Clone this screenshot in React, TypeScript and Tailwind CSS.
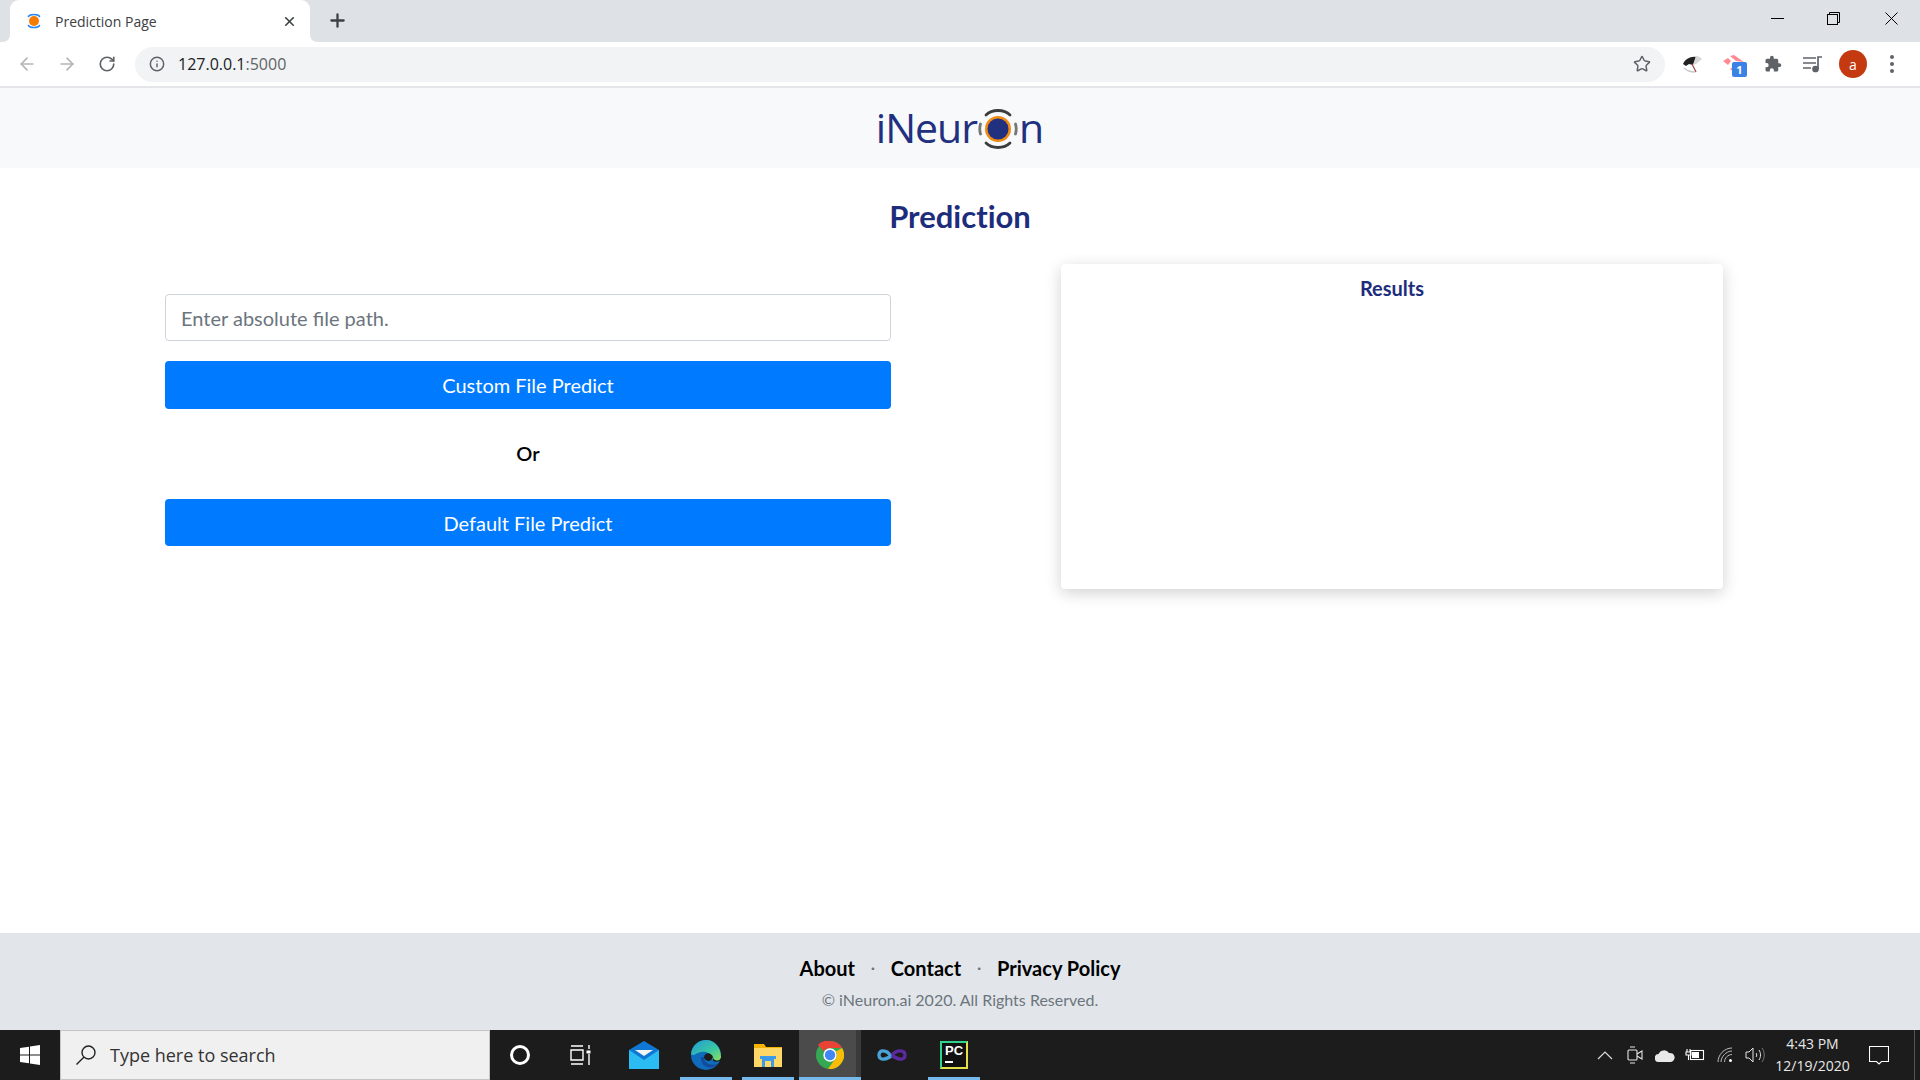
import { ArrowLeft, ArrowRight, Info, Plus, RotateCw, Star, X } from "lucide-react"

const lato = "font-['Lato','Liberation_Sans',sans-serif]"
const segoe = "font-['Open_Sans','Noto_Sans',sans-serif]"

function Favicon() {
  return (
    <svg width="16" height="18" viewBox="0 0 16 18">
      <circle cx="8" cy="9" r="5" fill="#f57c00" />
      <path d="M2.5 4.5C4 1.8 12 1.8 13.5 4.5M2.5 13.5C4 16.2 12 16.2 13.5 13.5" fill="none" stroke="#2a86f0" strokeWidth="1.6" strokeLinecap="round" />
    </svg>
  )
}

function BrowserTabs() {
  return (
    <div className="h-[42px] bg-[#dee1e6] flex items-end pl-[10px] relative">
      <div className="w-[300px] h-[42px] bg-white rounded-t-[9px] flex items-center pl-[16px] pr-[13px] relative">
        <Favicon />
        <span className={`ml-[13px] text-[14px] text-[#3c4043] ${segoe}`}>Prediction Page</span>
        <X size={15} strokeWidth={2.6} className="ml-auto text-[#3c4043]" />
        <svg width="8" height="8" viewBox="0 0 8 8" className="absolute bottom-0 -right-[8px]"><path d="M0 0C0 5 3 8 8 8H0Z" fill="#fff" /></svg>
        <svg width="8" height="8" viewBox="0 0 8 8" className="absolute bottom-0 -left-[8px]"><path d="M8 0C8 5 5 8 0 8H8Z" fill="#fff" /></svg>
      </div>
      <Plus size={21} strokeWidth={2.6} className="ml-[17px] mb-[11px] text-[#3c4043]" />
      <div className="ml-auto self-start flex h-[36px] items-center text-black">
        <div className="w-[56px] flex justify-center"><div className="w-[13px] h-px bg-black mr-[2px]" /></div>
        <div className="w-[56px] flex justify-center">
          <svg width="13" height="13" viewBox="0 0 13 13" fill="none" stroke="#000" className="mr-[2px]"><rect x=".5" y="2.5" width="10" height="10" /><path d="M2.5 2.5V.5H12.5V10.5H10.5" /></svg>
        </div>
        <div className="w-[58px] flex justify-center">
          <svg width="13" height="13" viewBox="0 0 13 13" stroke="#000"><path d="M.5.5 12.5 12.5M12.5.5.5 12.5" /></svg>
        </div>
      </div>
    </div>
  )
}

function BrowserToolbar() {
  return (
    <div className="h-[46px] bg-white border-b-2 border-[#e3e5e8] flex items-center">
      <div className="w-[135px] flex items-center pl-[17px]">
        <ArrowLeft size={20} className="text-[#b3b5b8]" />
        <ArrowRight size={20} className="ml-[20px] text-[#b3b5b8]" />
        <RotateCw size={18} strokeWidth={2.2} className="ml-[21px] text-[#5f6368]" />
      </div>
      <div className="w-[1530px] h-[35px] rounded-full bg-[#f1f3f4] flex items-center pl-[14px] pr-[14px]">
        <Info size={16} strokeWidth={2.2} className="text-[#5f6368]" />
        <span className={`ml-[13px] text-[16px] text-[#202124] ${segoe}`}>127.0.0.1<span className="text-[#5f6368]">:5000</span></span>
        <Star size={18} strokeWidth={2} className="ml-auto text-[#5f6368]" />
      </div>
      <div className="flex-1 flex items-center">
        <div className="w-[54px] flex justify-center">
          <svg width="22" height="22" viewBox="0 0 22 22">
            <path d="M2 11C4 6 10 3 15 4L12 12 8 11 5 13 2 11Z" fill="#222" />
            <path d="M15 3C18 3 20 5 21 6L15 11 12 12Z" fill="#d8d8d8" />
            <path d="M11 11 15 19" stroke="#9c4a4a" strokeWidth="1.2" />
            <path d="M3 15C6 18 11 19 14 19" stroke="#c9c9c9" strokeWidth="1.6" fill="none" />
          </svg>
        </div>
        <div className="w-[32px] flex justify-center relative">
          <svg width="22" height="18" viewBox="0 0 22 18" className="mr-[3px]">
            <path d="M0 6 5 3 8 6 5 10ZM7 1 11 0 21 7 13 6ZM7 14 13 10 16 12 11 17Z" fill="#ff8a94" />
          </svg>
          <span className={`absolute left-[13px] top-[7px] w-[15px] h-[15px] rounded-[2px] bg-[#3b82e6] text-white text-[11px] font-bold leading-[15px] text-center ${segoe}`}>1</span>
        </div>
        <div className="w-[44px] flex justify-center">
          <svg width="18" height="18" viewBox="0 0 24 24" fill="#5f6368"><path d="M20.5 11H19V7a2 2 0 0 0-2-2h-4V3.5a2.5 2.5 0 0 0-5 0V5H4a2 2 0 0 0-2 2v3.8h1.5a2.7 2.7 0 0 1 0 5.4H2V20a2 2 0 0 0 2 2h3.8v-1.5a2.7 2.7 0 0 1 5.4 0V22H17a2 2 0 0 0 2-2v-4h1.5a2.5 2.5 0 0 0 0-5z" /></svg>
        </div>
        <div className="w-[36px] flex justify-center">
          <svg width="20" height="18" viewBox="0 0 20 18" fill="none" stroke="#5f6368" strokeWidth="1.7"><path d="M0 3H13M0 8H13M0 13H8M15 14V2H19" /><circle cx="12.5" cy="14" r="2.5" fill="#5f6368" /></svg>
        </div>
        <div className={`ml-[8px] w-[28px] h-[28px] rounded-full bg-[#c4390f] text-white text-[14px] flex items-center justify-center ${segoe}`}>a</div>
        <div className="ml-[23px] flex flex-col gap-[3px]">
          <div className="w-[4px] h-[4px] rounded-full bg-[#5f6368]" />
          <div className="w-[4px] h-[4px] rounded-full bg-[#5f6368]" />
          <div className="w-[4px] h-[4px] rounded-full bg-[#5f6368]" />
        </div>
      </div>
    </div>
  )
}

function LogoMark() {
  return (
    <svg width="46" height="46" viewBox="0 0 46 46" className="mx-[-2px] mt-[2px]">
      <circle cx="23" cy="23" r="13" fill="#f08a12" />
      <circle cx="23" cy="23" r="10.5" fill="#21307f" />
      <g fill="none" stroke="#3d3d3d" strokeWidth="2.8" strokeLinecap="round">
        <path d="M11 9C17 3 29 3 35 9M11 37C17 43 29 43 35 37" />
        <path d="M5.5 18C4.6 21 4.6 25 5.5 28M40.5 18C41.4 21 41.4 25 40.5 28" stroke="#777" />
      </g>
    </svg>
  )
}

function PredictionForm() {
  return (
    <div className="w-[726px] pt-[30px] flex flex-col">
      <input
        placeholder="Enter absolute file path."
        className="h-[47px] rounded-[4px] border border-[#ced4da] bg-white px-[15px] text-[20px] outline-none placeholder:text-[#6c757d]"
      />
      <button className="mt-[20px] h-[48px] rounded-[4px] bg-[#007bff] text-white text-[20px]">Custom File Predict</button>
      <p className="mt-[32px] text-center text-[20px] font-semibold text-black leading-[24px]">Or</p>
      <button className="mt-[34px] h-[47px] rounded-[4px] bg-[#007bff] text-white text-[20px]">Default File Predict</button>
    </div>
  )
}

function Taskbar() {
  const bar = "absolute bottom-0 left-[5px] right-[5px] h-[3px] bg-[#76b9ed]"
  return (
    <div className={`h-[50px] bg-[#1c1c1c] flex items-stretch text-white ${segoe}`}>
      <div className="w-[60px] flex items-center justify-center">
        <svg width="20" height="20" viewBox="0 0 20 20" fill="#fff"><path d="M0 3 9 1.7V9.4H0ZM10 1.5 20 0V9.4H10ZM0 10.4H9V18.2L0 17ZM10 10.4H20V20L10 18.5Z" /></svg>
      </div>
      <div className="w-[430px] bg-[#f0f0f0] border border-[#c4c4c4] flex items-center pl-[14px]">
        <svg width="22" height="22" viewBox="0 0 22 22" fill="none" stroke="#222" strokeWidth="1.4"><circle cx="13.5" cy="8.5" r="6.5" /><path d="M8.8 13.2 1.5 20.5" /></svg>
        <span className="ml-[13px] text-[18px] text-[#333]">Type here to search</span>
      </div>
      <div className="w-[60px] flex items-center justify-center">
        <div className="w-[20px] h-[20px] rounded-full border-[3px] border-white" />
      </div>
      <div className="w-[60px] flex items-center justify-center">
        <svg width="21" height="20" viewBox="0 0 21 20" fill="none" stroke="#fff" strokeWidth="1.4"><path d="M1 1H13M1 19H13M1 5H13V15H1ZM19 0V4M19 9V20" /><rect x="16.5" y="5.5" width="4" height="3" fill="#fff" stroke="none" /></svg>
      </div>
      <div className="w-[65px] flex items-center justify-center">
        <svg width="30" height="28" viewBox="0 0 30 28" className="ml-[2px]">
          <path d="M0 9 15 0 30 9V28H0Z" fill="#0f78d4" />
          <path d="M0 9 15 19 30 9V28H0Z" fill="#2bbcf3" />
          <path d="M6 9H24L15 15Z" fill="#f4f4f4" />
        </svg>
      </div>
      <div className="w-[62px] relative flex items-center justify-center">
        <svg width="30" height="30" viewBox="0 0 30 30">
          <defs>
            <linearGradient id="edgeTop" x1="0" y1="0" x2="1" y2="1">
              <stop offset="0" stopColor="#1f9bd8" />
              <stop offset="0.6" stopColor="#3cc8a0" />
              <stop offset="1" stopColor="#8fe05a" />
            </linearGradient>
          </defs>
          <circle cx="15" cy="15" r="15" fill="#0f6cbd" />
          <path d="M0 14C1 5 8 0 15 0 24 0 30 8 30 17 30 21 25 22 22 20 20 12 14 11 10 12 5 13 2 17 0 14Z" fill="url(#edgeTop)" />
          <path d="M13 18C13 12 20 12 22 17 20 22 16 22 13 18Z" fill="#1c1c1c" />
          <path d="M22 17C22 21 28 22 30 18L30 20C28 22 24 22 22 21Z" fill="#1c1c1c" />
          <path d="M10 17C9 25 18 32 27 24 20 26 13 24 13 17Z" fill="#144a9c" />
          <path d="M27 24C24 29 18 30 15 30 20 30 24 28 27 24Z" fill="#1c1c1c" />
        </svg>
        <div className={bar} />
      </div>
      <div className="w-[62px] relative flex items-center justify-center">
        <svg width="28" height="24" viewBox="0 0 28 24">
          <path d="M0 1H10L12 4H28V24H0Z" fill="#f4b400" />
          <path d="M0 5H28V24H0Z" fill="#ffd766" />
          <path d="M8 24V15H20V24H17V18H11V24Z" fill="#3b9be8" />
          <rect x="6" y="13" width="16" height="3" fill="#3b9be8" />
        </svg>
        <div className={bar} />
      </div>
      <div className="w-[62px] relative flex items-center justify-center bg-[#4b4b4b] border-r-[5px] border-[#3a3a3a]">
        <svg width="28" height="28" viewBox="0 0 28 28" className="ml-[5px]">
          <circle cx="14" cy="14" r="14" fill="#34a853" />
          <path d="M14 0A14 14 0 0 1 26.1 7H14A7 7 0 0 0 7.9 10.5L2 3.7A14 14 0 0 1 14 0Z" fill="#ea4335" />
          <path d="M26.1 7A14 14 0 0 1 12 27.9L18.1 19.6A7 7 0 0 0 20 10.5Z" fill="#fbbc05" />
          <circle cx="14" cy="14" r="6.7" fill="#fff" />
          <circle cx="14" cy="14" r="5.2" fill="#4285f4" />
        </svg>
        <div className="absolute bottom-0 left-0 -right-[5px] h-[3px] bg-[#76b9ed]" />
      </div>
      <div className="w-[62px] flex items-center justify-center">
        <svg width="30" height="16" viewBox="0 0 30 16" fill="none" strokeWidth="3.4">
          <path d="M13 8C10 3 2 2 2 8 2 14 10 13 15 8" stroke="#4aa3d8" />
          <path d="M15 8C20 2 28 3 28 8 28 14 20 13 15 8" stroke="#5b2aa0" />
        </svg>
      </div>
      <div className="w-[62px] relative flex items-center justify-center">
        <div className="w-[28px] h-[28px] bg-[#111] border-2 border-[#2fd38a] border-r-[#e5e04a] border-b-[#e5e04a] flex flex-col px-[3px] pt-px">
          <span className="text-[13px] leading-[14px] font-bold text-white font-['Liberation_Sans',sans-serif]">PC</span>
          <div className="mt-[3px] w-[8px] h-[2px] bg-white" />
        </div>
        <div className={bar} />
      </div>
      <div className="ml-auto flex items-stretch">
        <div className="w-[30px] flex items-center justify-center">
          <svg width="16" height="10" viewBox="0 0 16 10" fill="none" stroke="#ddd" strokeWidth="1.2"><path d="M1 9 8 2 15 9" /></svg>
        </div>
        <div className="w-[30px] flex items-center justify-center">
          <svg width="16" height="20" viewBox="0 0 16 20" fill="none" stroke="#e5e5e5" strokeWidth="1.1"><rect x="1" y="5" width="9" height="10" rx="1" /><path d="M10 9 15 6V14L10 11M3 2H8M3 18H8" /></svg>
        </div>
        <div className="w-[30px] flex items-center justify-center">
          <svg width="20" height="13" viewBox="0 0 20 13" fill="#e8e8e8"><path d="M4 13A4 4 0 0 1 3.5 5 6 6 0 0 1 14 4 4.5 4.5 0 0 1 16 13Z" /></svg>
        </div>
        <div className="w-[30px] flex items-center justify-center">
          <svg width="20" height="14" viewBox="0 0 20 14" fill="none" stroke="#fff" strokeWidth="1.1"><rect x="5.5" y="2.5" width="13" height="9" /><rect x="7" y="4" width="7" height="6" fill="#fff" stroke="none" /><path d="M2 1V4M5 1V4M1 4H6V7H1ZM3.5 7V12" /></svg>
        </div>
        <div className="w-[30px] flex items-center justify-center">
          <svg width="16" height="16" viewBox="0 0 16 16" fill="none" stroke="#bbb" strokeWidth="1"><path d="M1 15C1 8 7 1 15 1M4 15C4 10 9 4 15 4M7.5 15C7.5 11 11 7.5 15 7.5" /><circle cx="13.5" cy="13.5" r="1.5" fill="#fff" stroke="none" /></svg>
        </div>
        <div className="w-[30px] flex items-center justify-center">
          <svg width="20" height="16" viewBox="0 0 20 16" fill="none" stroke="#e5e5e5" strokeWidth="1"><path d="M1 5H4L8 1V15L4 11H1Z" /><path d="M11 6C12 7 12 9 11 10M14 3C16 6 16 10 14 13" /><path d="M17 1C20 5 20 11 17 15" stroke="#777" /></svg>
        </div>
        <div className="w-[85px] flex flex-col items-center justify-center text-[14px] leading-[22px] text-[#e8e8e8]">
          <span>4:43 PM</span>
          <span>12/19/2020</span>
        </div>
        <div className="w-[48px] flex items-center justify-center">
          <svg width="20" height="20" viewBox="0 0 20 20" fill="none" stroke="#fff" strokeWidth="1.1"><path d="M.5 1.5H19.5V16.5H12.5L10 19 7.5 16.5H.5Z" /></svg>
        </div>
        <div className="w-[11px]" />
        <div className="w-px bg-[#555]" />
        <div className="w-[5px]" />
      </div>
    </div>
  )
}

export default function App() {
  return (
    <div className={`h-screen flex flex-col bg-white overflow-hidden ${lato}`}>
      <BrowserTabs />
      <BrowserToolbar />

      {/* Logo bar */}
      <div className="h-[80px] bg-[#f8f9fa] flex items-center justify-center">
        <span className={`text-[41px] leading-none font-medium tracking-[-1px] text-[#21307f] -mt-[2px] ${segoe}`}>iNeur</span>
        <LogoMark />
        <span className={`text-[41px] leading-none font-medium text-[#21307f] -mt-[2px] ${segoe}`}>n</span>
      </div>

      <main className="flex-1 flex flex-col">
        <h1 className="mt-[27px] text-center text-[31px] leading-[42px] font-bold text-[#1d2d7c] [font-variant-ligatures:none]">Prediction</h1>
        <div className="mt-[27px] flex pl-[165px]">
          <PredictionForm />
          <div className="ml-[170px] w-[662px] h-[325px] bg-white rounded-[4px] shadow-[0_4px_16px_rgba(0,0,0,0.18)] pt-[11px] text-center">
            <h2 className="text-[20px] leading-[26px] font-bold text-[#1d2d7c]">Results</h2>
          </div>
        </div>
      </main>

      {/* Footer */}
      <footer className="h-[97px] bg-[#e2e6ea] flex flex-col items-center pt-[21px]">
        <div className="flex items-center text-[20px] leading-[28px] font-bold text-black">
          <span>About</span>
          <span className="mx-[16px] text-[#6c757d] text-[14px]">·</span>
          <span>Contact</span>
          <span className="mx-[16px] text-[#6c757d] text-[14px]">·</span>
          <span>Privacy Policy</span>
        </div>
        <p className="mt-[7px] text-[16px] leading-[22px] text-[#6c757d]">© iNeuron.ai 2020. All Rights Reserved.</p>
      </footer>

      <Taskbar />
    </div>
  )
}
